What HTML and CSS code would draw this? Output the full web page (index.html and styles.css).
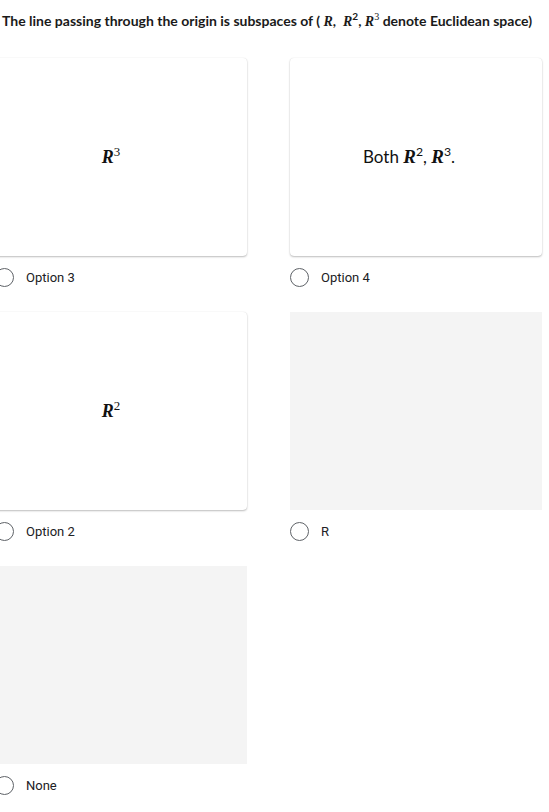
FILE: index.html
```html
<!DOCTYPE html>
<html>
<head>
<meta charset="utf-8">
<link rel="stylesheet" href="styles.css">
</head>
<body>
<div class="question">The line passing through the origin is subspaces of ( <i class="m">R</i>,&nbsp; <i class="m">R</i><sup>2</sup>, <i class="m">R</i><sup class="n">3</sup> denote Euclidean space)</div>
<div class="grid">
  <div class="opt">
    <div class="card"><span class="math"><i class="m">R</i><sup class="n">3</sup></span></div>
    <div class="radio"><span class="circle"></span><span class="label">Option 3</span></div>
  </div>
  <div class="opt">
    <div class="card"><span class="both">Both <i class="m">R</i><sup>2</sup>, <i class="m">R</i><sup>3</sup>.</span></div>
    <div class="radio"><span class="circle"></span><span class="label">Option 4</span></div>
  </div>
  <div class="opt">
    <div class="card"><span class="math"><i class="m">R</i><sup>2</sup></span></div>
    <div class="radio"><span class="circle"></span><span class="label">Option 2</span></div>
  </div>
  <div class="opt">
    <div class="blank"></div>
    <div class="radio"><span class="circle"></span><span class="label">R</span></div>
  </div>
  <div class="opt">
    <div class="blank"></div>
    <div class="radio"><span class="circle"></span><span class="label">None</span></div>
  </div>
</div>
</body>
</html>
```
FILE: styles.css
```css
html, body {
  margin: 0;
  padding: 0;
  background: #fff;
}
.question {
  font-family: "Lato", "Open Sans", sans-serif;
  font-weight: 700;
  font-size: 14px;
  color: #1a1a1a;
  padding: 12px 0 0 2px;
  height: 45px;
  box-sizing: border-box;
  white-space: nowrap;
}
.question sup, .card sup {
  font-size: 0.72em;
  vertical-align: 0.55em;
  line-height: 0;
}
.m {
  font-family: "Liberation Serif", "DejaVu Serif", serif;
  font-style: italic;
  font-weight: 700;
}
sup.n {
  font-family: "Liberation Serif", serif;
  font-weight: 400;
}
.grid {
  display: grid;
  grid-template-columns: 252px 252px;
  column-gap: 43px;
  margin-left: -5px;
  padding-top: 13px;
}
.opt {
  display: flex;
  flex-direction: column;
}
.card {
  height: 198px;
  background: #fff;
  border-radius: 4px;
  box-shadow: 0 1px 2px rgba(0,0,0,0.25), 0 0 1px rgba(0,0,0,0.12);
  display: flex;
  align-items: center;
  justify-content: center;
}
.blank {
  height: 198px;
  background: #f4f4f4;
}
.math {
  font-size: 18px;
  color: #111;
  margin-right: 20px;
}
.both {
  font-family: "Lato", "Open Sans", sans-serif;
  font-size: 17px;
  color: #111;
  margin-right: 14px;
}
.both .m {
  font-size: 19px;
}
.radio {
  display: flex;
  align-items: center;
  gap: 12px;
  height: 56px;
  box-sizing: border-box;
  padding-bottom: 14px;
}
.circle {
  width: 19px;
  height: 19px;
  box-sizing: border-box;
  border: 1.5px solid #5f6368;
  border-radius: 50%;
  flex: none;
}
.label {
  font-family: "Roboto", sans-serif;
  font-size: 13px;
  color: #202124;
}
```
